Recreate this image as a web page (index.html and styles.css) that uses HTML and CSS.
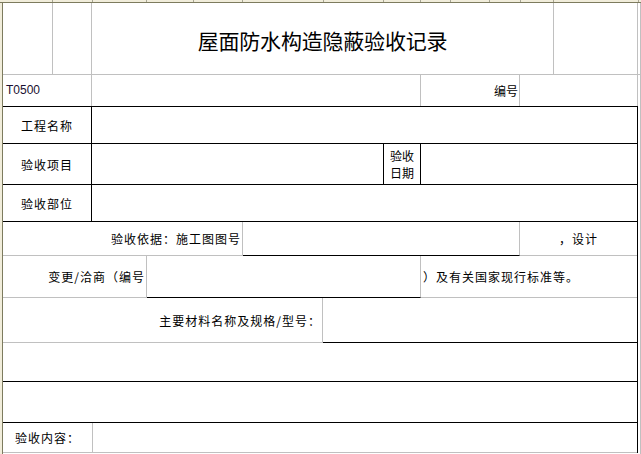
FILE: index.html
```html
<!DOCTYPE html>
<html lang="zh-CN">
<head>
    <meta charset="UTF-8">
    <title>屋面防水构造隐蔽验收记录</title>
    <link rel="stylesheet" href="styles.css">
</head>
<body>
    <div class="colhead">
        <span></span><span></span><span></span><span></span><span></span><span></span><span></span>
        <span></span><span></span><span></span><span></span><span></span><span></span><span></span>
    </div>

    <div class="frame">
        <div class="rowhead"></div>

        <div class="sheet">
            <div class="row row-title">
                <div class="cell"></div>
                <div class="cell"></div>
                <div class="cell title">屋面防水构造隐蔽验收记录</div>
                <div class="cell"></div>
                <div class="cell end"></div>
            </div>

            <div class="row row-code">
                <div class="cell code">T0500</div>
                <div class="cell"></div>
                <div class="cell right">编号</div>
                <div class="cell"></div>
                <div class="cell end"></div>
            </div>

            <!-- bordered form block -->
            <div class="box">
                <div class="row line r-name">
                    <div class="cell label">工程名称</div>
                    <div class="cell"></div>
                </div>
                <div class="row line r-item">
                    <div class="cell label">验收项目</div>
                    <div class="cell dark"></div>
                    <div class="cell label two">
                        <span>验收</span>
                        <span>日期</span>
                    </div>
                    <div class="cell"></div>
                </div>
                <div class="row line r-part">
                    <div class="cell label">验收部位</div>
                    <div class="cell"></div>
                </div>
                <div class="row r-basis">
                    <div class="cell soft right">验收依据：施工图图号</div>
                    <div class="cell input"></div>
                    <div class="cell soft-b center">，设计</div>
                </div>
                <div class="row r-change">
                    <div class="cell soft right">变更/洽商（编号</div>
                    <div class="cell input"></div>
                    <div class="cell soft-b lead">）及有关国家现行标准等。</div>
                </div>
                <div class="row r-material">
                    <div class="cell soft right">主要材料名称及规格/型号：</div>
                    <div class="cell dark-b"></div>
                </div>
                <div class="row line r-blank1"></div>
                <div class="row line r-blank2"></div>
                <div class="row r-content">
                    <div class="cell soft indent">验收内容：</div>
                    <div class="cell soft-b"></div>
                </div>
            </div>
        </div>
    </div>
</body>
</html>
```

FILE: styles.css
```css
:root {
    --grid: #c0c0c0;
    --ink: #000000;
    --head: #f1eddb;
    --head-line: #7d7b5e;
}

* {
    margin: 0;
    padding: 0;
    box-sizing: border-box;
}

body {
    width: 641px;
    height: 454px;
    overflow: hidden;
    background: #ffffff;
    color: var(--ink);
    font-family: "Noto Sans CJK SC", "Noto Sans", sans-serif;
    font-size: 12px;
    line-height: 15px;
}

/* spreadsheet column header strip */
.colhead {
    display: grid;
    grid-template-columns: 53px 40px 54px 47px 49px 81px 60px 37px 30px 39px 31px 33px 85px 1fr;
    height: 3px;
    background: var(--head);
    border-bottom: 1px solid var(--head-line);
}

.colhead span {
    border-right: 1px solid #a8a694;
}

.colhead span:last-child {
    border-right: none;
}

.frame {
    display: flex;
}

.rowhead {
    width: 3px;
    height: 451px;
    background: var(--head);
    border-right: 1px solid var(--head-line);
}

.sheet {
    flex: 1;
    border-right: 1px solid var(--grid);
}

.row {
    display: grid;
}

.cell {
    display: flex;
    align-items: center;
    min-width: 0;
    white-space: nowrap;
}

/* title + code rows, plain gridlines */
.row-title {
    grid-template-columns: 50px 39px 462px 84px 1fr;
    height: 72px;
}

.row-title .cell {
    border-right: 1px solid var(--grid);
    border-bottom: 1px solid var(--grid);
}

.row-code {
    grid-template-columns: 89px 329px 99px 118px 1fr;
    height: 31px;
}

.row-code .cell {
    border-right: 1px solid var(--grid);
}

.row .end {
    border-right: none;
}

.title {
    justify-content: center;
    padding-top: 4px;
    font-size: 21px;
    letter-spacing: -0.2px;
}

.code {
    padding-left: 3px;
    font-family: "Liberation Sans", Arial, sans-serif;
    color: #1a1030;
}

.right {
    justify-content: flex-end;
    padding-right: 1px;
}

.center {
    justify-content: center;
}

.lead {
    padding-left: 2px;
}

.indent {
    padding-left: 12px;
}

/* the bordered block */
.box {
    width: 635px;
    border-top: 1px solid var(--ink);
    border-right: 1px solid var(--ink);
    letter-spacing: 1px;
}

.line {
    border-bottom: 1px solid var(--ink);
}

.label {
    justify-content: center;
    border-right: 1px solid var(--ink);
}

.label.two {
    flex-direction: column;
    line-height: 17px;
    letter-spacing: 0;
}

.dark {
    border-right: 1px solid var(--ink);
}

.r-name,
.r-part {
    grid-template-columns: 89px 1fr;
    height: 37px;
}

.r-item {
    grid-template-columns: 89px 292px 37px 1fr;
    height: 41px;
}

.r-basis {
    grid-template-columns: 240px 277px 1fr;
    height: 34px;
}

.r-change {
    grid-template-columns: 144px 274px 1fr;
    height: 42px;
}

.r-material {
    grid-template-columns: 320px 1fr;
    height: 45px;
}

.r-blank1 {
    height: 39px;
}

.r-blank2 {
    height: 41px;
}

.r-content {
    grid-template-columns: 90px 1fr;
    height: 30px;
}

.soft {
    border-right: 1px solid var(--grid);
    border-bottom: 1px solid var(--grid);
}

.soft-b {
    border-bottom: 1px solid var(--grid);
}

.input {
    border-right: 1px solid var(--grid);
    border-bottom: 1px solid var(--ink);
}

.dark-b {
    border-bottom: 1px solid var(--ink);
}
```
